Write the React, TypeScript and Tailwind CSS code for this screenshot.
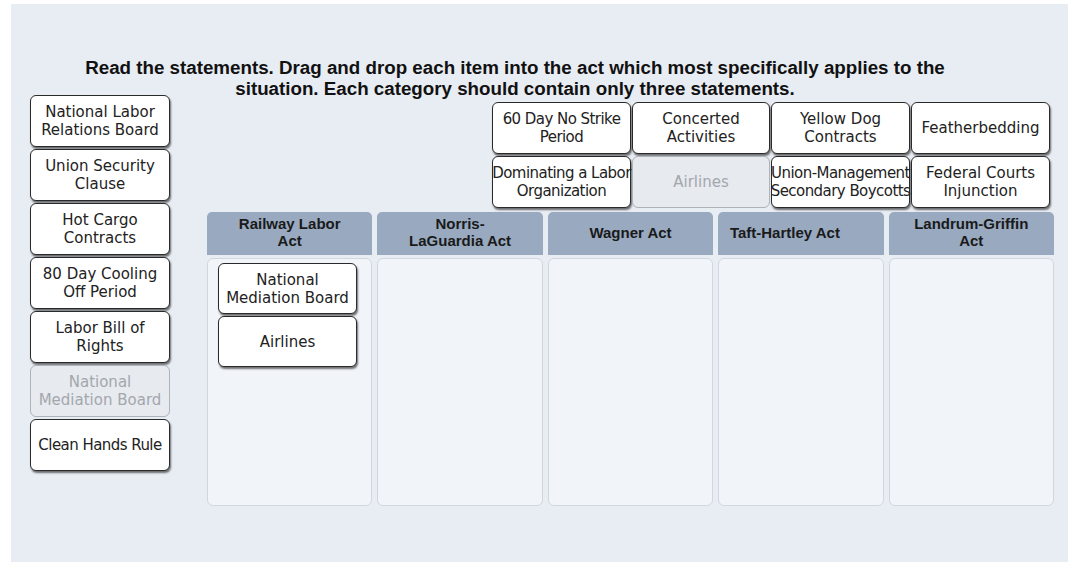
const tileFont = { fontFamily: '"DejaVu Sans", Verdana, sans-serif' };

type TileProps = {
  label: string;
  disabled?: boolean;
  small?: boolean;
  className?: string;
};

function Tile({ label, disabled, small, className = '' }: TileProps) {
  return (
    <div
      className={`flex items-center justify-center text-center rounded-[6px] border text-[15px] leading-[18px] ${
        small ? 'tracking-[-0.55px]' : ''
      } ${
        disabled
          ? 'bg-[#e7eaef] border-[#aeb3ba] text-[#a3a7ad]'
          : 'bg-white border-[#2a2a2a] text-[#222] shadow-[1px_2px_2px_rgba(0,0,0,0.55)]'
      } ${className}`}
      style={tileFont}
    >
      <span className="whitespace-pre">{label}</span>
    </div>
  );
}

const bank = [
  { label: 'National Labor\nRelations Board' },
  { label: 'Union Security\nClause' },
  { label: 'Hot Cargo\nContracts' },
  { label: '80 Day Cooling\nOff Period' },
  { label: 'Labor Bill of\nRights' },
  { label: 'National\nMediation Board', disabled: true },
  { label: 'Clean Hands Rule', small: true },
];

const pool = [
  { label: '60 Day No Strike\nPeriod', small: true },
  { label: 'Concerted\nActivities' },
  { label: 'Yellow Dog\nContracts' },
  { label: 'Featherbedding' },
  { label: 'Dominating a Labor\nOrganization', small: true },
  { label: 'Airlines', disabled: true },
  { label: 'Union-Management\nSecondary Boycotts', small: true },
  { label: 'Federal Courts\nInjunction' },
];

const acts = [
  { title: 'Railway Labor\nAct', items: ['National\nMediation Board', 'Airlines'], pad: '' },
  { title: 'Norris-\nLaGuardia Act', items: [], pad: '' },
  { title: 'Wagner Act', items: [], pad: '' },
  { title: 'Taft-Hartley Act', items: [], pad: 'pr-[32px]' },
  { title: 'Landrum-Griffin\nAct', items: [], pad: '' },
];

export default function App() {
  return (
    <div className="min-h-[567px] bg-white pt-[4px] pl-[11px]">
      <div className="w-[1057px] h-[558px] bg-[#e8ecf3]">
        <h1
          className="pt-[53px] ml-[19px] w-[970px] text-center font-bold text-[18.75px] leading-[21px] text-[#111]"
          style={{ fontFamily: '"Liberation Sans", Arial, sans-serif' }}
        >
          Read the statements. Drag and drop each item into the act which most specifically applies to the
          <br />
          situation. Each category should contain only three statements.
        </h1>

        <div className="flex mt-[-4px] pl-[19px]">
          <div className="flex flex-col gap-[2px] w-[140px]">
            {bank.map((b, i) => (
              <Tile key={i} label={b.label} disabled={b.disabled} small={b.small} className="h-[52px]" />
            ))}
          </div>

          <div className="ml-[37px] w-[847px]">
            <div className="flex justify-end pr-[4px] pt-[7px]">
              <div className="grid grid-cols-[139px_138px_139px_139px] gap-x-[1px] gap-y-[2px]">
                {pool.map((p, i) => (
                  <Tile key={i} label={p.label} disabled={p.disabled} small={p.small} className="h-[52px]" />
                ))}
              </div>
            </div>

            <div className="grid grid-cols-5 gap-[5px] mt-[4px]">
              {acts.map((a, i) => (
                <div key={i} className="flex flex-col">
                  <div
                    className={`h-[43px] flex items-center justify-center text-center bg-[#98a9c0] rounded-t-[5px] font-bold text-[15px] leading-[17px] text-[#1a1a1a] whitespace-pre-line pb-[3px] ${a.pad}`}
                    style={{ fontFamily: '"Liberation Sans", Arial, sans-serif' }}
                  >
                    {a.title}
                  </div>
                  <div className="mt-[3px] h-[248px] bg-[#f1f4f8] border border-[#d2d7de] rounded-[6px] pt-[4px] pl-[10px] flex flex-col gap-[2px]">
                    {a.items.map((it, j) => (
                      <Tile key={j} label={it} className="h-[51px] w-[139px]" />
                    ))}
                  </div>
                </div>
              ))}
            </div>
          </div>
        </div>
      </div>
    </div>
  );
}
